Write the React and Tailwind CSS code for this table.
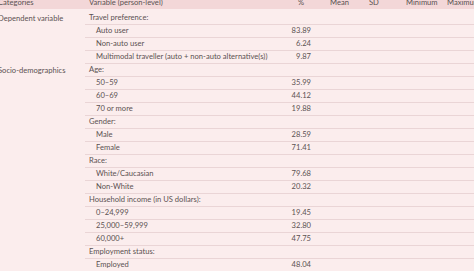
const groups = [
  {
    category: 'Dependent variable',
    rows: [
      { label: 'Travel preference:', head: true },
      { label: 'Auto user', pct: '83.89' },
      { label: 'Non-auto user', pct: '6.24' },
      { label: 'Multimodal traveller (auto + non-auto alternative(s))', pct: '9.87' },
    ],
  },
  {
    category: 'Socio-demographics',
    rows: [
      { label: 'Age:', head: true },
      { label: '50–59', pct: '35.99' },
      { label: '60–69', pct: '44.12' },
      { label: '70 or more', pct: '19.88' },
      { label: 'Gender:', head: true },
      { label: 'Male', pct: '28.59' },
      { label: 'Female', pct: '71.41' },
      { label: 'Race:', head: true },
      { label: 'White/Caucasian', pct: '79.68' },
      { label: 'Non-White', pct: '20.32' },
      { label: 'Household income (in US dollars):', head: true },
      { label: '0–24,999', pct: '19.45' },
      { label: '25,000–59,999', pct: '32.80' },
      { label: '60,000+', pct: '47.75' },
      { label: 'Employment status:', head: true },
      { label: 'Employed', pct: '48.04' },
    ],
  },
];

function Row({ category, label, pct, head }) {
  return (
    <div className="flex h-[13px] items-center">
      <div className="-ml-[2px] w-[87px] shrink-0 whitespace-nowrap">{category}</div>
      <div className="flex h-full flex-1 items-center border-b border-[#ead5d6]">
        <div className={`w-[186px] shrink-0 whitespace-nowrap ${head ? 'pl-[4px]' : 'pl-[11px]'}`}>{label}</div>
        <div className="w-[40px] shrink-0 text-right">{pct}</div>
      </div>
    </div>
  );
}

export default function App() {
  return (
    <div
      className="h-[271px] w-[474px] overflow-hidden bg-[#fbeded] text-[7.6px] leading-none text-[#5b5252]"
      style={{ fontFamily: 'Lato, "Open Sans", sans-serif' }}
    >
      {/* Header */}
      <div className="h-[12px]">
        <div className="flex h-[9px] items-start bg-[#f3d7d8]">
          <div className="-ml-[2px] w-[87px] shrink-0 -mt-[1px]">Categories</div>
          <div className="w-[186px] shrink-0 pl-[4px] -mt-[1px]">Variable (person-level)</div>
          <div className="w-[40px] shrink-0 pr-[7px] text-right -mt-[1px]">%</div>
          <div className="w-[58px] shrink-0 pl-[19px] -mt-[1px]">Mean</div>
          <div className="w-[37px] shrink-0 -mt-[1px]">SD</div>
          <div className="w-[41px] shrink-0 -mt-[1px]">Minimum</div>
          <div className="flex-1 whitespace-nowrap -mt-[1px]">Maximum</div>
        </div>
      </div>

      {groups.map((g) =>
        g.rows.map((r, i) => (
          <Row key={g.category + r.label} category={i === 0 ? g.category : ''} {...r} />
        ))
      )}
    </div>
  );
}
